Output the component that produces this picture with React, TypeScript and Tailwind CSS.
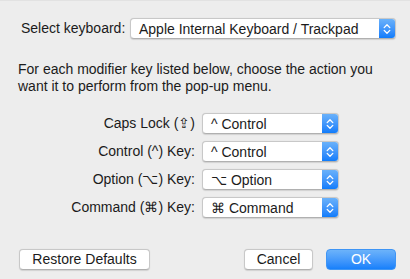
import React from "react";

const font = { fontFamily: '"Liberation Sans", Arial, sans-serif' };

function Chevrons() {
  return (
    <svg width="8" height="12" viewBox="0 0 8 12" fill="none">
      <path d="M1.2 4.6 L4 1.8 L6.8 4.6" stroke="white" strokeWidth="1.3" strokeLinecap="round" strokeLinejoin="round" />
      <path d="M1.2 7.4 L4 10.2 L6.8 7.4" stroke="white" strokeWidth="1.3" strokeLinecap="round" strokeLinejoin="round" />
    </svg>
  );
}

function Popup({ text, w }: { text: string; w: string }) {
  return (
    <div
      className={`${w} h-[21px] flex items-stretch rounded-[4px] bg-white border border-[#c8c8c8] border-b-[#b0b0b0] shadow-[0_0.5px_1px_rgba(0,0,0,0.12)] overflow-hidden`}
    >
      <div className="flex-1 flex items-center pl-[8px] text-[14px] text-[#1b1b1b] leading-none whitespace-nowrap">{text}</div>
      <div className="w-[16px] flex items-center justify-center bg-gradient-to-b from-[#69b1fa] to-[#0d7cfb]">
        <Chevrons />
      </div>
    </div>
  );
}

function Button({ children, w, primary }: { children: React.ReactNode; w: string; primary?: boolean }) {
  return primary ? (
    <div className={`${w} h-[21px] flex items-center justify-center rounded-[4px] bg-gradient-to-b from-[#6cb3fa] to-[#1580fb] border border-[#3f95f5] text-white text-[14px]`}>
      {children}
    </div>
  ) : (
    <div className={`${w} h-[21px] flex items-center justify-center rounded-[4px] bg-white border border-[#c8c8c8] border-b-[#b0b0b0] shadow-[0_0.5px_1px_rgba(0,0,0,0.12)] text-[#1b1b1b] text-[14px]`}>
      {children}
    </div>
  );
}

const rows: [string, string][] = [
  ["Caps Lock (⇪)", "^ Control"],
  ["Control (^) Key:", "^ Control"],
  ["Option (⌥) Key:", "⌥ Option"],
  ["Command (⌘) Key:", "⌘ Command"],
];

export default function App() {
  return (
    <div style={font} className="w-[410px] h-[279px] bg-[#ededed] border-t border-[#e2e2e2] flex flex-col">
      <div className="flex items-center pt-[17px] pl-[21px]">
        <div className="text-[14px] text-[#1b1b1b] w-[109px] whitespace-nowrap">Select keyboard:</div>
        <Popup text="Apple Internal Keyboard / Trackpad" w="w-[266px]" />
      </div>
      <div className="mt-[22px] pl-[18px] text-[14px] leading-[17px] text-[#1b1b1b] whitespace-nowrap">
        For each modifier key listed below, choose the action you
        <br />
        want it to perform from the pop-up menu.
      </div>
      <div className="mt-[18px] flex flex-col gap-[7px]">
        {rows.map(([label, value]) => (
          <div key={label} className="flex items-center">
            <div className="w-[195px] text-right text-[14px] text-[#1b1b1b] whitespace-nowrap">{label}</div>
            <div className="ml-[7px]">
              <Popup text={value} w="w-[137px]" />
            </div>
          </div>
        ))}
      </div>
      <div className="mt-[31px] flex items-center pl-[19px] pr-[14px]">
        <Button w="w-[131px]">Restore Defaults</Button>
        <div className="flex-1" />
        <Button w="w-[69px]">Cancel</Button>
        <div className="w-[13px]" />
        <Button w="w-[70px]" primary>OK</Button>
      </div>
    </div>
  );
}
